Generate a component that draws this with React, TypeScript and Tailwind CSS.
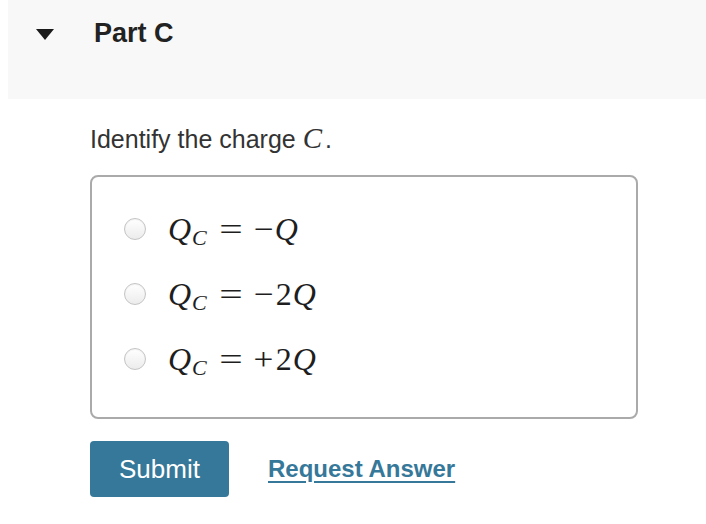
import React from "react";

const OPTIONS = [
  { sign: "−", value: "Q" },
  { sign: "−", value: "2Q" },
  { sign: "+", value: "2Q" },
];

function Radio() {
  return (
    <span className="w-[22px] h-[22px] rounded-full border border-[#c4c4c4] bg-gradient-to-b from-white to-[#ececec] shadow-[inset_0_1px_1px_rgba(0,0,0,0.05)] shrink-0" />
  );
}

function MathExpr({ sign, value }: { sign: string; value: string }) {
  const num = value.slice(0, -1);
  return (
    <span className="font-['Liberation_Serif',serif] text-[32px] text-[#1e1e1e] leading-none flex items-baseline">
      <span className="italic">Q</span>
      <span className="italic text-[22px] relative top-[5px] ml-[1px]">C</span>
      <span className="ml-[12px] mr-[10px] w-[24px] inline-block text-center scale-x-[1.3]">=</span>
      <span className="w-[21px] inline-block text-center scale-x-[1.1]">{sign}</span>
      {num && <span className="ml-[2px]">{num}</span>}
      <span className="italic ml-[1px]">Q</span>
    </span>
  );
}

export default function App() {
  return (
    <div className="w-[706px] h-[524px] bg-white font-['Liberation_Sans',Arial,sans-serif] text-[#222]">
      {/* Header */}
      <div className="ml-[8px] h-[99px] bg-[#f8f8f8] flex items-start pt-[17px]">
        <svg width="18" height="11" viewBox="0 0 18 11" className="ml-[28px] mt-[12px]">
          <polygon points="0,0 18,0 9,11" fill="#1a1a1a" />
        </svg>
        <h2 className="ml-[40px] text-[27px] font-bold leading-[32px] text-[#222]">Part C</h2>
      </div>

      <div className="pl-[90px] pr-[68px]">
        <p className="mt-[24px] text-[25px] leading-[30px] text-[#333]">
          Identify the charge{" "}
          <span className="font-['Liberation_Serif',serif] italic text-[29px]">C</span>
          <span className="ml-[3px]">.</span>
        </p>

        <div className="mt-[21px] w-[548px] h-[244px] border-2 border-[#aaa] rounded-[8px] pl-[32px] pt-[37px] flex flex-col gap-[35px]">
          {OPTIONS.map((o, i) => (
            <label key={i} className="flex items-center gap-[22px] h-[30px]">
              <Radio />
              <MathExpr sign={o.sign} value={o.value} />
            </label>
          ))}
        </div>

        <div className="mt-[22px] flex items-center">
          <button className="w-[139px] h-[56px] bg-[#367899] rounded-[4px] text-white text-[26px]">
            Submit
          </button>
          <a href="#" className="ml-[39px] text-[24px] font-bold text-[#367899] underline decoration-2 underline-offset-[4px]">
            Request Answer
          </a>
        </div>
      </div>
    </div>
  );
}
